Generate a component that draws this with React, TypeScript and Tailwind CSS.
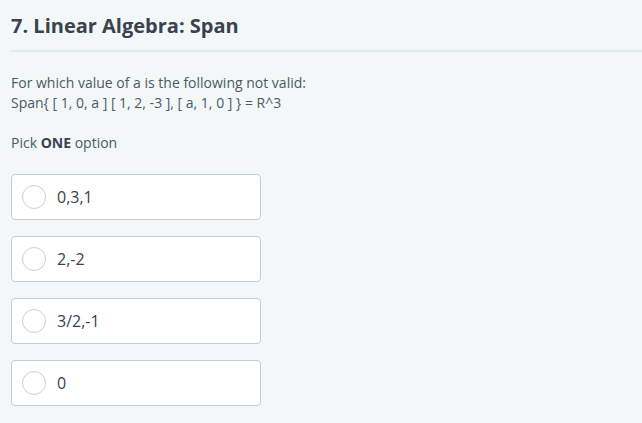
import React from "react";

const options = ["0,3,1", "2,-2", "3/2,-1", "0"];

export default function App() {
  return (
    <div
      className="min-h-[423px] w-full bg-[#f3f7f7] pl-[11px] pt-[12px]"
      style={{ fontFamily: '"Open Sans", "Liberation Sans", sans-serif' }}
    >
      <h1 className="border-b-2 border-[#e4eaec] pb-[10px] text-[20px] font-bold leading-[28px] text-[#39424e]">
        7. Linear Algebra: Span
      </h1>
      <div className="mt-[21px] text-[14px] leading-[19.5px] text-[#4b5a63]">
        <p>For which value of a is the following not valid:</p>
        <p>Span{"{"} [ 1, 0, a ] [ 1, 2, -3 ], [ a, 1, 0 ] {"}"} = R^3</p>
      </div>
      <p className="mt-[21px] text-[14px] leading-[20px] text-[#4b5a63]">
        Pick <span className="font-bold text-[#39424e]">ONE</span> option
      </p>
      <div className="mt-[21px] flex w-[250px] flex-col gap-[16px]">
        {options.map((o) => (
          <div
            key={o}
            className="flex h-[46px] items-center rounded-[4px] border border-[#c2ced2] bg-white pl-[10px]"
          >
            <span className="h-[24px] w-[24px] shrink-0 rounded-full border border-[#c4d2d4] bg-white" />
            <span className="ml-[11px] text-[16px] text-[#39424e]">{o}</span>
          </div>
        ))}
      </div>
    </div>
  );
}
